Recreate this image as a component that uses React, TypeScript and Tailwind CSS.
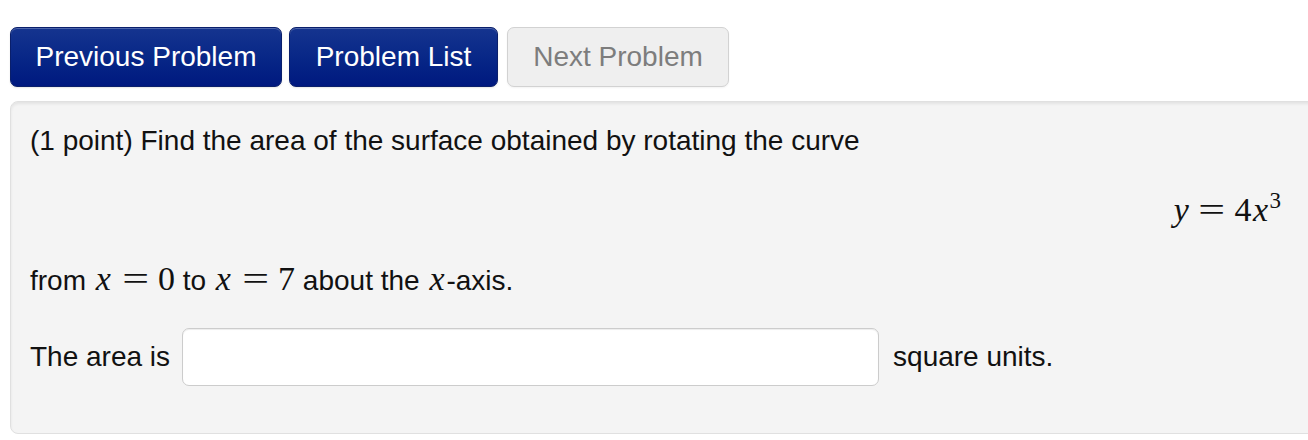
import React from "react";

const V = ({ children, w }: { children: React.ReactNode; w: string }) => (
  <span className={`inline-block italic text-center ${w}`}>{children}</span>
);

const Eq = () => <span className="inline-block mx-[13px] scale-x-[1.4]">=</span>;

export default function App() {
  return (
    <div className="w-[1308px] h-[440px] overflow-hidden bg-white font-['Liberation_Sans',Arial,sans-serif] text-[#111]">
      <div className="flex pt-[27px] pl-[10px]">
        <button className="flex h-[60px] w-[272px] items-center justify-center rounded-[7px] border border-[#0a1f6b] bg-linear-to-b from-[#15348f] to-[#00187f] text-[28px] leading-[42px] text-white shadow-[inset_0_1px_0_rgba(255,255,255,0.25),0_1px_2px_rgba(0,0,0,0.1)]">
          Previous Problem
        </button>
        <button className="ml-[7px] flex h-[60px] w-[209px] items-center justify-center rounded-[7px] border border-[#0a1f6b] bg-linear-to-b from-[#15348f] to-[#00187f] text-[28px] leading-[42px] text-white shadow-[inset_0_1px_0_rgba(255,255,255,0.25),0_1px_2px_rgba(0,0,0,0.1)]">
          Problem List
        </button>
        <button className="ml-[9px] flex h-[60px] w-[222px] items-center justify-center rounded-[7px] border border-[#d2d2d2] bg-[#efefef] text-[28px] leading-[42px] text-[#7d7d7d] shadow-[0_1px_2px_rgba(0,0,0,0.05)]">
          Next Problem
        </button>
      </div>

      <div className="ml-[10px] mt-[14px] w-[1330px] rounded-[8px] border border-[#e0e0e0] bg-[#f4f4f4] pl-[19px] pt-[19px] pb-[47px] text-[28px] leading-[40px] shadow-[inset_0_2px_3px_rgba(0,0,0,0.07)]">
        <div className="h-[40px]">
          (1 point) Find the area of the surface obtained by rotating the curve
        </div>

        <div className="mt-[29px] flex h-[40px] w-[1251px] justify-end font-['Liberation_Serif',serif] text-[34px]">
          <span className="whitespace-nowrap">
            <V w="w-[16px]">y</V>
            <Eq />
            <span>4</span>
            <V w="w-[18px]">x</V>
            <span className="relative -top-[13px] text-[23px]">3</span>
          </span>
        </div>

        <div className="mt-[29px] h-[40px] whitespace-nowrap">
          from{" "}
          <span className="font-['Liberation_Serif',serif] text-[34px]">
            <V w="w-[19px]">x</V>
            <Eq />
            <span>0</span>
          </span>{" "}
          to{" "}
          <span className="font-['Liberation_Serif',serif] text-[34px]">
            <V w="w-[19px]">x</V>
            <Eq />
            <span>7</span>
          </span>{" "}
          about the{" "}
          <span className="font-['Liberation_Serif',serif] text-[34px]">
            <V w="w-[19px]">x</V>
          </span>
          -axis.
        </div>

        <div className="mt-[29px] flex h-[58px] items-center">
          <span>The area is</span>
          <input
            type="text"
            className="ml-[12px] h-[58px] w-[697px] rounded-[7px] border border-[#cccccc] bg-white shadow-[inset_0_1px_1px_rgba(0,0,0,0.075)] outline-none"
          />
          <span className="ml-[14px]">square units.</span>
        </div>
      </div>
    </div>
  );
}
